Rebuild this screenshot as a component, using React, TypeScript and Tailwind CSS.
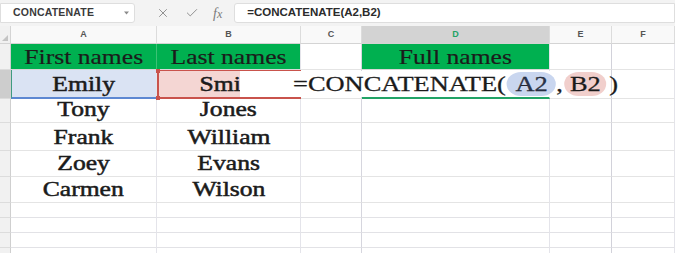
import { X, Check } from "lucide-react";

const serif = "font-['Liberation_Serif','Times_New_Roman',serif]";
const sans = "font-['Liberation_Sans',Arial,sans-serif]";

const letters = ["A", "B", "C", "D", "E", "F"];

const dataRows = [
  ["Tony", "Jones"],
  ["Frank", "William"],
  ["Zoey", "Evans"],
  ["Carmen", "Wilson"],
];

// right border colour per column (A..F)
const colLine = [
  "border-r-[#e4e4ea]",
  "border-r-[#e4e4ea]",
  "border-r-[#d6d6de]",
  "border-r-[#e4e4ea]",
  "border-r-[#d2d2da]",
  "border-r-[#e4e4ea]",
];

function CellText({ children, heavy = true }: { children: React.ReactNode; heavy?: boolean }) {
  return (
    <span
      className={`inline-block whitespace-nowrap origin-center scale-x-[1.22] text-[21px] leading-none text-[#1b1b1b] ${serif} ${
        heavy ? "[-webkit-text-stroke:0.5px_#1b1b1b]" : "[-webkit-text-stroke:0.2px_#1b1b1b]"
      }`}
    >
      {children}
    </span>
  );
}

function RowHead({ active = false }: { active?: boolean }) {
  return (
    <div
      className={`border-r border-b border-r-[#cfcfcf] border-b-[#dcdcdc] ${
        active ? "bg-[#cdcdcd]" : "bg-[#f1f1f1]"
      }`}
    />
  );
}

export default function App() {
  return (
    <div className="w-[675px] h-[253px] overflow-hidden bg-white">
      {/* formula bar */}
      <div className={`h-[26px] bg-[#f3f3f3] flex items-center ${sans}`}>
        <div className="w-[135px] h-[20px] bg-white border border-[#dedede] rounded-r-[3px] flex items-center justify-between pl-[12px] pr-[5px]">
          <span className="text-[10.5px] font-bold text-[#3a3a3a] tracking-[0.2px]">CONCATENATE</span>
          <svg width="5" height="4" viewBox="0 0 5 4">
            <path d="M0 0.5h5L2.5 3.5z" fill="#8a8a8a" />
          </svg>
        </div>
        <X className="ml-[21px] w-[14px] h-[14px] text-[#7a7a7a]" strokeWidth={1.4} />
        <Check className="ml-[15px] w-[14px] h-[14px] text-[#7a7a7a]" strokeWidth={1.4} />
        <span className={`ml-[14px] text-[14px] italic text-[#7a7a7a] ${serif}`}>
          f<span className="text-[12px]">x</span>
        </span>
        <div className="ml-[12px] flex-1 h-[20px] bg-white border border-[#dedede] rounded-l-[3px] flex items-center pl-[12px]">
          <span className="text-[11.5px] font-bold text-[#2b2b2b]">=CONCATENATE(A2,B2)</span>
        </div>
      </div>

      {/* sheet */}
      <div className="relative grid grid-cols-[11px_146px_144px_61px_188px_62px_1fr] grid-rows-[18px_26px_29px_24px_28px_26px_26px_15px_15px_15px_15px]">
        {/* column headers */}
        <div className="bg-[#f1f1f1] border-r border-b border-[#d4d4d4] flex items-end justify-end p-[2px]">
          <svg width="6" height="6" viewBox="0 0 6 6">
            <path d="M6 0v6H0z" fill="#c4c4c4" />
          </svg>
        </div>
        {letters.map((l) => (
          <div
            key={l}
            className={`flex items-end justify-center pb-[2px] border-r border-b border-r-[#dcdcdc] border-b-[#d4d4d4] text-[9px] font-bold ${sans} ${
              l === "D" ? "bg-[#d3d3d3] text-[#21a366]" : "bg-[#f9f9f9] text-[#555]"
            }`}
          >
            {l}
          </div>
        ))}

        {/* row 1: headers */}
        <RowHead />
        <div className="bg-[#00b050] border-r border-b border-r-[#3cc275] border-b-[#d8d8d8] flex items-end justify-center pb-[1px]">
          <CellText heavy={false}>First names</CellText>
        </div>
        <div className="bg-[#00b050] border-r border-b border-r-[#e4e4ea] border-b-[#d8d8d8] flex items-end justify-center pb-[1px]">
          <CellText heavy={false}>Last names</CellText>
        </div>
        <div className={`border-r border-b border-b-[#e4e4e4] ${colLine[2]}`} />
        <div className="bg-[#00b050] border-r border-b border-r-[#e4e4ea] border-b-[#d8d8d8] flex items-end justify-center pb-[1px]">
          <CellText heavy={false}>Full names</CellText>
        </div>
        <div className={`border-r border-b border-b-[#e4e4e4] ${colLine[4]}`} />
        <div className={`border-r border-b border-b-[#e4e4e4] ${colLine[5]}`} />

        {/* row 2: editing */}
        <RowHead active />
        <div className="bg-[#dae3f3] border-l border-l-[#3f9b80] border-b-2 border-b-[#5d88d2] border-r border-r-[#e4e4ea] flex items-end justify-center pb-[2px]">
          <CellText>Emily</CellText>
        </div>
        <div className="relative bg-[#f4d6d3] border-l-2 border-l-[#c9534c] border-t border-t-[#c9534c] border-b-2 border-b-[#c9534c] flex items-end justify-center pb-[2px]">
          <CellText>Smith</CellText>
          <span className="absolute -left-[3px] -top-[2px] w-[4px] h-[4px] bg-[#c9534c]" />
          <span className="absolute -left-[3px] -bottom-[3px] w-[4px] h-[4px] bg-[#c9534c]" />
        </div>
        <div className={`border-r border-b border-b-[#e4e4e4] ${colLine[2]}`} />
        <div className={`border-r border-b-2 border-b-[#21a366] ${colLine[3]}`} />
        <div className={`border-r border-b border-b-[#e4e4e4] ${colLine[4]}`} />
        <div className={`border-r border-b border-b-[#e4e4e4] ${colLine[5]}`} />

        {/* data rows */}
        {dataRows.map(([first, last]) => (
          <div key={first} className="contents">
            <RowHead />
            <div className={`border-r border-b border-b-[#e4e4e4] ${colLine[0]} flex items-end justify-center pb-[2px]`}>
              <CellText>{first}</CellText>
            </div>
            <div className={`border-r border-b border-b-[#e4e4e4] ${colLine[1]} flex items-end justify-center pb-[2px]`}>
              <CellText>{last}</CellText>
            </div>
            {[2, 3, 4, 5].map((c) => (
              <div key={c} className={`border-r border-b border-b-[#e4e4e4] ${colLine[c]}`} />
            ))}
          </div>
        ))}

        {/* empty rows */}
        {[0, 1, 2, 3].map((r) => (
          <div key={r} className="contents">
            <RowHead />
            {[0, 1, 2, 3, 4, 5].map((c) => (
              <div key={c} className={`border-r border-b border-b-[#e2e2e6] ${colLine[c]}`} />
            ))}
          </div>
        ))}

        {/* in-cell editor */}
        <div className="absolute left-[240px] top-[45px] w-[371px] h-[26px] bg-white flex items-end pl-[53px] pb-[1px]">
          <span
            className={`inline-flex items-center whitespace-nowrap origin-left scale-x-[1.2] text-[22px] leading-none text-[#1b1b1b] [-webkit-text-stroke:0.3px_#1b1b1b] ${serif}`}
          >
            =CONCATENATE(
            <span className="ml-[1px] rounded-full bg-[#c9d6ef] px-[7px] py-[1px] text-[#2a3550]">A2</span>
            ,
            <span className="ml-[1px] rounded-full bg-[#f1cfcc] px-[5px] py-[1px]">B2</span>
            <span className="ml-[2px]">)</span>
          </span>
        </div>
      </div>
    </div>
  );
}
